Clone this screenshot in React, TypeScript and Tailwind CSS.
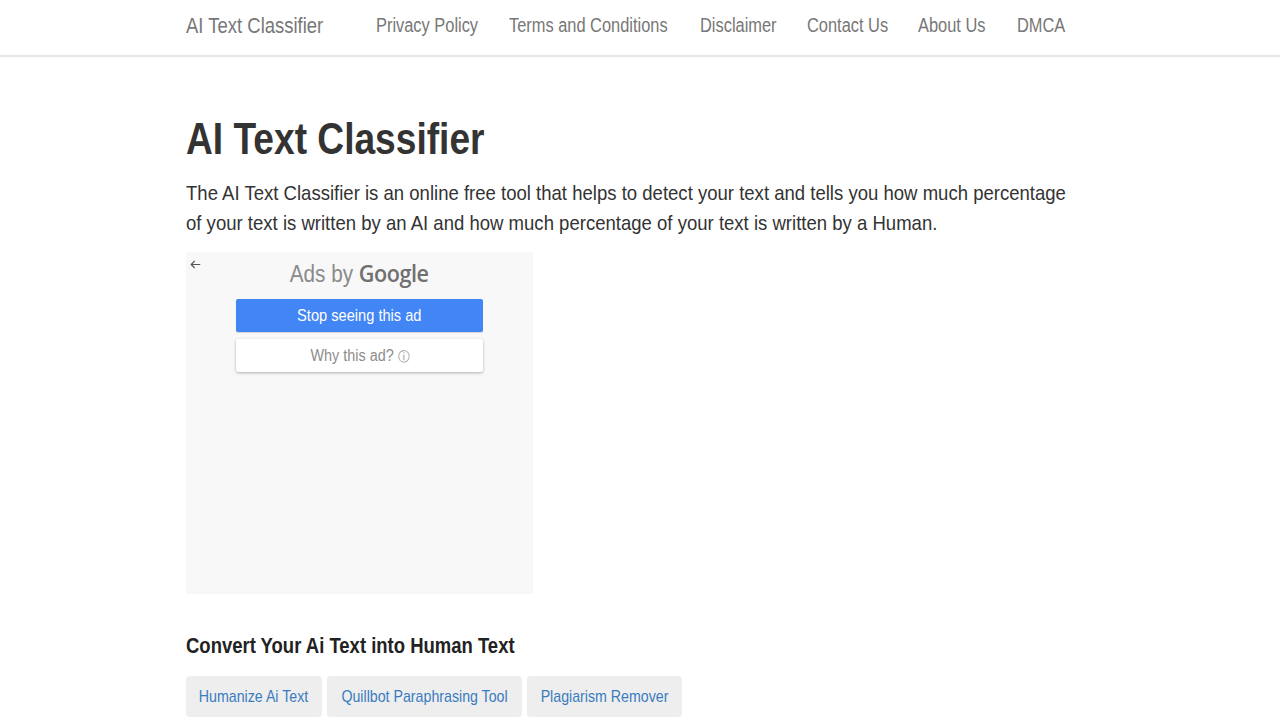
import React from "react";

export default function App() {
  const links: [string, string][] = [
    ["Privacy Policy", "w-[102px]"],
    ["Terms and Conditions", "w-[160px]"],
    ["Disclaimer", "w-[76px]"],
    ["Contact Us", "w-[80px]"],
    ["About Us", "w-[68px]"],
    ["DMCA", "w-[48px]"],
  ];
  const btns: [string, string][] = [
    ["Humanize Ai Text", "w-[136px]"],
    ["Quillbot Paraphrasing Tool", "w-[195px]"],
    ["Plagiarism Remover", "w-[155px]"],
  ];
  return (
    <div className="min-h-[720px] bg-white font-['Liberation_Sans',Arial,sans-serif]">
      <nav className="h-[57px] border-b-2 border-[#e7e7e7] bg-white">
        <div className="ml-[186px] flex h-full items-center pb-[5px]">
          <div className="w-[139px] whitespace-nowrap">
            <span className="inline-block origin-left scale-x-[0.84] text-[22px] text-[#777]">AI Text Classifier</span>
          </div>
          <div className="ml-[51px] flex items-center gap-[31px]">
            {links.map(([l, w]) => (
              <a key={l} className={`${w} whitespace-nowrap`}>
                <span className="inline-block origin-left scale-x-[0.82] text-[20px] text-[#777]">{l}</span>
              </a>
            ))}
          </div>
        </div>
      </nav>
      <main className="ml-[186px] w-[908px] pt-[57px]">
        <h1 className="whitespace-nowrap text-[45px] font-bold leading-[50px] text-[#333]">
          <span className="inline-block origin-left scale-x-[0.825]">AI Text Classifier</span>
        </h1>
        <p className="mt-[14px] whitespace-nowrap text-[21px] leading-[30px] text-[#333]">
          <span className="inline-block origin-left scale-x-[0.883]">
            The AI Text Classifier is an online free tool that helps to detect your text and tells you how much percentage
          </span>
          <br />
          <span className="inline-block origin-left scale-x-[0.883]">
            of your text is written by an AI and how much percentage of your text is written by a Human.
          </span>
        </p>
        <div className="relative mt-[14px] flex h-[342px] w-[347px] flex-col items-center bg-[#f8f8f8]">
          <svg className="absolute left-[3px] top-[6px]" width="13" height="13" viewBox="0 0 24 24" fill="none" stroke="#555" strokeWidth="2" strokeLinecap="round" strokeLinejoin="round">
            <path d="M20 12H4M10 6l-6 6 6 6" />
          </svg>
          <div className="mt-[8px] whitespace-nowrap leading-[26px]">
            <span className="inline-block origin-center scale-x-[0.9]">
              <span className="text-[23px] text-[#8a8a8a]">Ads by </span>
              <span className="font-['Open_Sans',sans-serif] text-[24px] font-semibold tracking-[-0.5px] text-[#707070]">Google</span>
            </span>
          </div>
          <div className="mt-[9px] flex h-[33px] w-[247px] items-center justify-center rounded-[2px] bg-[#4285f4] text-[17px] text-white shadow-[0_1px_1px_rgba(0,0,0,0.15)]">
            <span className="inline-block origin-center scale-x-[0.86] whitespace-nowrap">Stop seeing this ad</span>
          </div>
          <div className="mt-[7px] flex h-[33px] w-[247px] items-center justify-center rounded-[2px] bg-white text-[16px] text-[#8c8c8c] shadow-[0_1px_3px_rgba(0,0,0,0.3)]">
            <span className="inline-block origin-center scale-x-[0.9] whitespace-nowrap">
              Why this ad? <span className="text-[13px]">ⓘ</span>
            </span>
          </div>
        </div>
        <h3 className="mt-[40px] whitespace-nowrap text-[22px] font-bold leading-[24px] text-[#222]">
          <span className="inline-block origin-left scale-x-[0.84]">Convert Your Ai Text into Human Text</span>
        </h3>
        <div className="mt-[18px] flex gap-[5px]">
          {btns.map(([t, w]) => (
            <a key={t} className={`${w} flex h-[41px] items-center justify-center rounded-[4px] bg-[#eeeeee] text-[17px] text-[#3a7cc0]`}>
              <span className="inline-block origin-center scale-x-[0.835] whitespace-nowrap">{t}</span>
            </a>
          ))}
        </div>
      </main>
    </div>
  );
}
